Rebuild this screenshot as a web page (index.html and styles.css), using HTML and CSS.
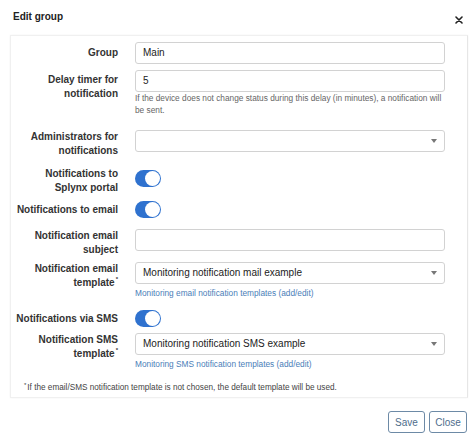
FILE: index.html
```html
<!DOCTYPE html>
<html>
<head>
<meta charset="utf-8">
<link rel="stylesheet" href="styles.css">
</head>
<body>
<div class="modal">
  <div class="header">
    <div class="title">Edit group</div>
    <svg class="close" width="8" height="8" viewBox="0 0 8 8"><path d="M1 1L7 7M7 1L1 7" stroke="#222" stroke-width="1.6" stroke-linecap="round"/></svg>
  </div>
  <div class="panel">
    <div class="row">
      <div class="label p4">Group</div>
      <div class="field"><div class="input">Main</div></div>
    </div>
    <div class="row">
      <div class="label p3">Delay timer for notification</div>
      <div class="field">
        <div class="input">5</div>
        <div class="help">If the device does not change status during this delay (in minutes), a notification will be sent.</div>
      </div>
    </div>
    <div class="row g14">
      <div class="label">Administrators for notifications</div>
      <div class="field"><div class="input select"><span></span><i class="caret"></i></div></div>
    </div>
    <div class="row g10">
      <div class="label">Notifications to Splynx portal</div>
      <div class="field"><div class="toggle t3"><span class="knob"></span></div></div>
    </div>
    <div class="row g7">
      <div class="label p2">Notifications to email</div>
      <div class="field"><div class="toggle"><span class="knob"></span></div></div>
    </div>
    <div class="row g11">
      <div class="label">Notification email subject</div>
      <div class="field"><div class="input"></div></div>
    </div>
    <div class="row">
      <div class="label">Notification email template<span class="star">*</span></div>
      <div class="field">
        <div class="input select"><span>Monitoring notification mail example</span><i class="caret"></i></div>
        <a class="link">Monitoring email notification templates (add/edit)</a>
      </div>
    </div>
    <div class="row g11">
      <div class="label p2">Notifications via SMS</div>
      <div class="field"><div class="toggle"><span class="knob"></span></div></div>
    </div>
    <div class="row">
      <div class="label">Notification SMS template<span class="star">*</span></div>
      <div class="field">
        <div class="input select"><span>Monitoring notification SMS example</span><i class="caret"></i></div>
        <a class="link">Monitoring SMS notification templates (add/edit)</a>
      </div>
    </div>
    <div class="note"><span class="star">*</span>If the email/SMS notification template is not chosen, the default template will be used.</div>
  </div>
  <div class="footer">
    <button class="btn save">Save</button>
    <button class="btn cls">Close</button>
  </div>
</div>
</body>
</html>
```
FILE: styles.css
```css
html, body {
  margin: 0;
  padding: 0;
  background: #fff;
}
body {
  font-family: "Liberation Sans", Arial, Helvetica, sans-serif;
  color: #333;
  width: 474px;
  height: 440px;
  overflow: hidden;
}
.modal {
  padding: 0 6px 0 10px;
}
.header {
  display: flex;
  justify-content: space-between;
  align-items: flex-start;
  height: 35px;
}
.title {
  font-size: 10px;
  font-weight: bold;
  color: #222;
  margin: 11px 0 0 3px;
}
.close {
  margin: 16px 5px 0 0;
}
.panel {
  border: 1px solid #f0f0f0;
  border-right-color: #e6e6e6;
  box-shadow: 0 0 2px rgba(0,0,0,0.05);
  width: 458px;
  height: 363px;
  box-sizing: border-box;
  padding: 6px 22px 0 0;
}
.row {
  display: flex;
  gap: 17px;
  margin-top: 6px;
  align-items: flex-start;
}
.row:first-child { margin-top: 0; }
.g7 { margin-top: 7px; }
.g10 { margin-top: 10px; }
.g11 { margin-top: 11px; }
.g14 { margin-top: 14px; }
.label {
  width: 107px;
  flex: none;
  font-size: 10px;
  font-weight: bold;
  text-align: right;
  line-height: 13.5px;
  color: #333;
}
.p2 { padding-top: 2px; }
.p3 { padding-top: 3px; }
.p4 { padding-top: 4px; }
.star {
  display: inline-block;
  font-size: 6px;
  vertical-align: top;
  line-height: 6px;
  margin-left: 1px;
}
.field {
  width: 310px;
  display: flex;
  flex-direction: column;
  align-items: flex-start;
}
.input {
  width: 100%;
  height: 22px;
  box-sizing: border-box;
  border: 1px solid #d2d2d2;
  border-radius: 3px;
  font-size: 10px;
  line-height: 20px;
  padding: 0 7px;
  color: #222;
  background: #fff;
}
.select {
  display: flex;
  justify-content: space-between;
  align-items: center;
}
.caret {
  width: 0;
  height: 0;
  border-left: 3px solid transparent;
  border-right: 3px solid transparent;
  border-top: 4px solid #777;
}
.help {
  font-size: 8.3px;
  color: #666;
  line-height: 12px;
}
.link {
  font-size: 8.3px;
  color: #4a7eb8;
  line-height: 12px;
  margin-top: 3px;
}
.toggle {
  width: 26px;
  height: 17px;
  border-radius: 9px;
  background: #2f72cf;
  position: relative;
}
.t3 { margin-top: 3px; }
.knob {
  position: absolute;
  right: 1px;
  top: 1px;
  width: 15px;
  height: 15px;
  border-radius: 50%;
  background: #fff;
}
.note {
  font-size: 8.2px;
  color: #444;
  line-height: 11px;
  margin: 12px 0 0 13px;
}
.note .star { margin: 0 1px 0 0; }
.footer {
  display: flex;
  justify-content: flex-end;
  gap: 4px;
  padding: 13px 1px 0 0;
}
.btn {
  font-family: "Liberation Sans", Arial, sans-serif;
  font-size: 10px;
  color: #4e6d8c;
  background: #fff;
  border: 1px solid #6d8aa6;
  border-radius: 3px;
  height: 22px;
  padding: 0;
  cursor: pointer;
}
.save { width: 37px; }
.cls { width: 38px; }
```
